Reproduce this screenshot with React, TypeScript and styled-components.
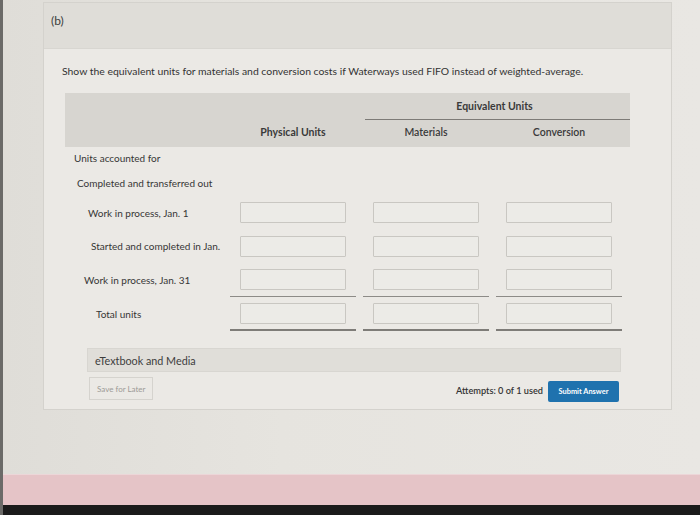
import React from "react";
import styled, { createGlobalStyle } from "styled-components";

const Global = createGlobalStyle`
  html, body { margin: 0; padding: 0; background: #e4e2dd; }
  body { font-family: Lato, "Open Sans", Arial, sans-serif; color: #3a3a3a; }
  * { box-sizing: border-box; }
`;

const Screen = styled.div`
  width: 700px;
  height: 515px;
  display: flex;
  flex-direction: column;
  overflow: hidden;
  border-left: 3px solid #6b6a68;
`;

const Main = styled.div`
  flex: 1;
  display: flex;
  padding: 2px 0 0 40px;
  background: linear-gradient(90deg, #dfddd8 0%, #e6e4df 40%, #e9e7e3 100%);
`;

const Card = styled.div`
  width: 629px;
  height: 408px;
  border: 1px solid #d4d2cd;
  background: #ebe9e5;
  display: flex;
  flex-direction: column;
`;

const CardHeader = styled.div`
  height: 46px;
  background: #dfddd8;
  padding: 10px 0 0 7px;
  font-size: 12px;
  color: #3d3d3d;
  border-bottom: 1px solid #d8d6d1;
`;

const CardBody = styled.div`
  padding: 15px 0 0 18px;
  display: flex;
  flex-direction: column;
  flex: 1;
`;

const Question = styled.div`
  font-size: 10.4px;
  line-height: 14px;
  color: #333;
`;

const Table = styled.div`
  margin: 15px 0 0 3px;
  display: grid;
  grid-template-columns: 158px 126px 126px 126px;
  column-gap: 7px;
`;

const HeadBand = styled.div`
  grid-column: 1 / -1;
  margin-right: -8px;
  display: grid;
  grid-template-columns: 158px 126px 126px 126px;
  grid-template-rows: 27px 27px;
  column-gap: 7px;
  background: #d7d5d0;
  padding-right: 8px;
`;

const GroupHead = styled.div`
  grid-column: 3 / 5;
  grid-row: 1;
  display: flex;
  align-items: center;
  justify-content: center;
  font-size: 10.5px;
  font-weight: 700;
  color: #3a3a3a;
  border-bottom: 1.5px solid #7d7b77;
  margin-left: 2px;
  margin-right: -8px;
  padding-right: 6px;
`;

const ColHead = styled.div<{ $col: number }>`
  grid-column: ${(p) => p.$col};
  grid-row: 2;
  display: flex;
  align-items: center;
  justify-content: center;
  padding-bottom: 3px;
  font-size: 10.5px;
  font-weight: ${(p) => (p.$col === 2 ? 700 : 600)};
  color: #3a3a3a;
`;

const Label = styled.div<{ $indent: number; $h: number }>`
  grid-column: 1;
  height: ${(p) => p.$h}px;
  display: flex;
  align-items: center;
  padding-left: ${(p) => p.$indent}px;
  font-size: 10px;
  color: #363636;
  white-space: nowrap;
`;

const Spacer = styled.div`
  grid-column: 2 / -1;
`;

const Cell = styled.div<{ $line?: "thin" | "thick"; $h: number }>`
  height: ${(p) => p.$h}px;
  display: flex;
  align-items: center;
  justify-content: center;
  border-bottom: ${(p) =>
    p.$line === "thick"
      ? "2.5px solid #7e7c78"
      : p.$line === "thin"
      ? "1.5px solid #8d8b87"
      : "none"};
`;

const Input = styled.div`
  width: 106px;
  height: 21px;
  border: 1px solid #c9c7c2;
  border-radius: 1px;
  background: #ecebe7;
`;

const Media = styled.div`
  margin: 17px 0 0 25px;
  width: 534px;
  height: 24px;
  background: #e0ded9;
  border: 1px solid #d8d6d1;
  display: flex;
  align-items: center;
  padding-left: 7px;
  font-size: 10.8px;
  color: #3d3d3d;
`;

const Footer = styled.div`
  margin: 5px 0 0 27px;
  width: 530px;
  display: flex;
  align-items: flex-start;
`;

const SaveBtn = styled.div`
  height: 23px;
  padding: 0 7px;
  border: 1px solid #d5d3ce;
  display: flex;
  align-items: center;
  font-size: 8px;
  color: #9c9a96;
`;

const Attempts = styled.div`
  margin-left: auto;
  margin-right: 5px;
  margin-top: 8px;
  font-size: 9.2px;
  font-weight: 600;
  color: #333;
`;

const Submit = styled.div`
  margin-top: 4px;
  height: 21px;
  width: 71px;
  background: #1f72ae;
  border-radius: 2px;
  color: #fff;
  font-size: 7.4px;
  font-weight: 700;
  display: flex;
  align-items: center;
  justify-content: center;
`;

const Pink = styled.div`
  height: 31px;
  background: #e5c4c7;
  border-top: 1px solid #ecd6d8;
`;

const Black = styled.div`
  height: 10px;
  background: #1b1b1b;
`;

type Row = { label: string; indent: number; h: number; inputs: boolean; line?: "thin" | "thick" };

const rows: Row[] = [
  { label: "Units accounted for", indent: 9, h: 22, inputs: false },
  { label: "Completed and transferred out", indent: 12, h: 27, inputs: false },
  { label: "Work in process, Jan. 1", indent: 23, h: 33, inputs: true },
  { label: "Started and completed in Jan.", indent: 26, h: 34, inputs: true },
  { label: "Work in process, Jan. 31", indent: 19, h: 34, inputs: true, line: "thin" },
  { label: "Total units", indent: 31, h: 34, inputs: true, line: "thick" },
];

export default function App() {
  return (
    <>
      <Global />
      <Screen>
        <Main>
          <Card>
            <CardHeader>(b)</CardHeader>
            <CardBody>
              <Question>
                Show the equivalent units for materials and conversion costs if Waterways used FIFO instead of weighted-average.
              </Question>
              <Table>
                <HeadBand>
                  <GroupHead>Equivalent Units</GroupHead>
                  <ColHead $col={2}>Physical Units</ColHead>
                  <ColHead $col={3}>Materials</ColHead>
                  <ColHead $col={4}>Conversion</ColHead>
                </HeadBand>
                {rows.map((r) => (
                  <React.Fragment key={r.label}>
                    <Label $indent={r.indent} $h={r.h}>
                      {r.label}
                    </Label>
                    {r.inputs ? (
                      [0, 1, 2].map((i) => (
                        <Cell key={i} $h={r.h} $line={r.line}>
                          <Input />
                        </Cell>
                      ))
                    ) : (
                      <Spacer />
                    )}
                  </React.Fragment>
                ))}
              </Table>
              <Media>eTextbook and Media</Media>
              <Footer>
                <SaveBtn>Save for Later</SaveBtn>
                <Attempts>Attempts: 0 of 1 used</Attempts>
                <Submit>Submit Answer</Submit>
              </Footer>
            </CardBody>
          </Card>
        </Main>
        <Pink />
        <Black />
      </Screen>
    </>
  );
}
